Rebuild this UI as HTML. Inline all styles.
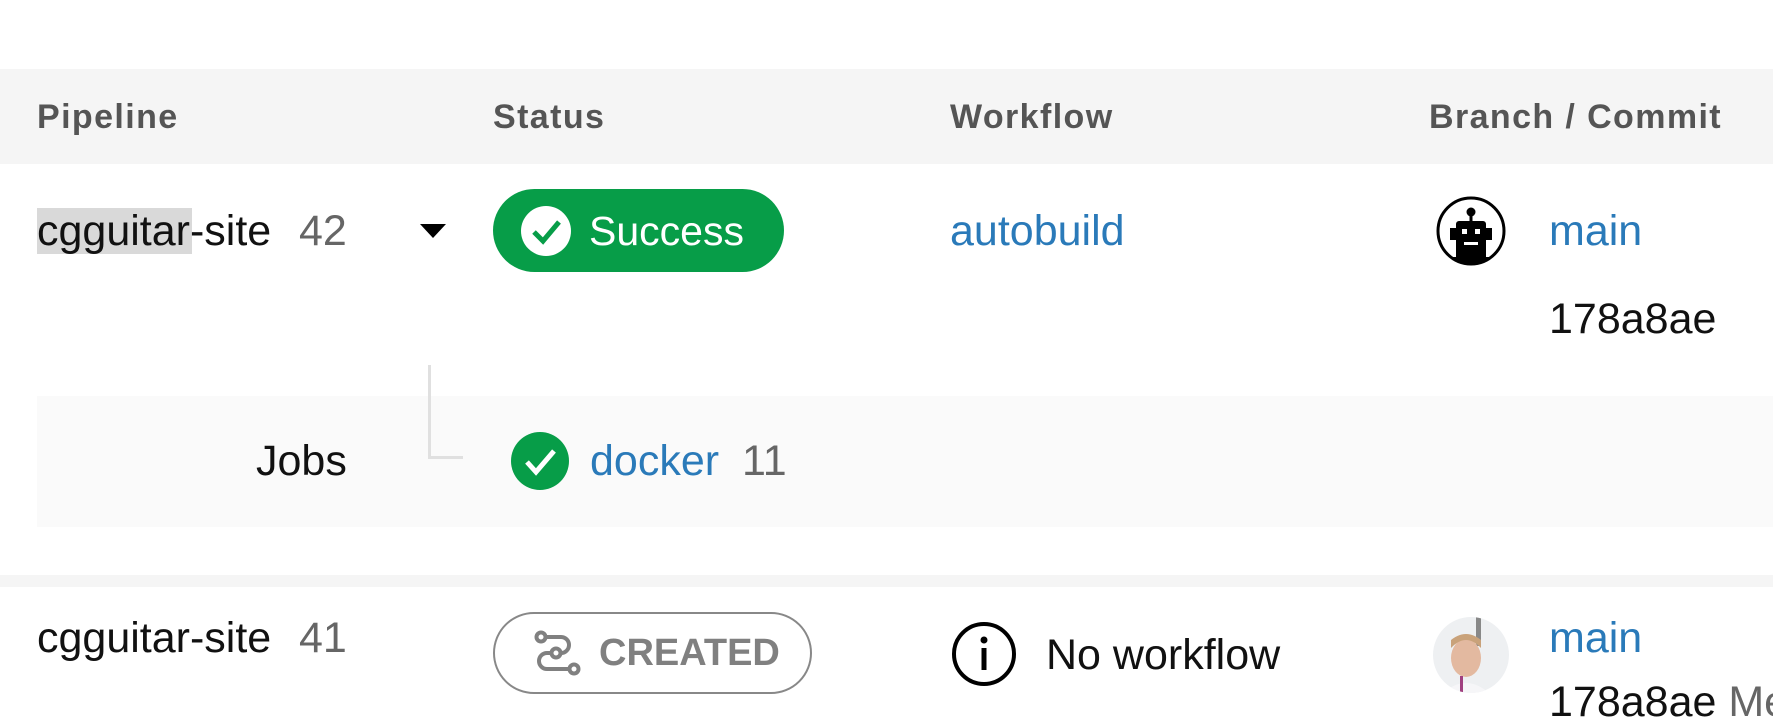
<!DOCTYPE html>
<html><head><meta charset="utf-8"><style>
*{margin:0;padding:0;box-sizing:border-box}
body{width:1773px;height:716px;background:#fff;position:relative;overflow:hidden;font-family:"Liberation Sans",Arial,sans-serif;color:#111}
.a{position:absolute;white-space:nowrap}
.h{font-weight:bold;font-size:34px;color:#555;letter-spacing:1.4px;top:98px}
.t{font-size:43px;line-height:50px}
.blue{color:#2a7ab9}
.grey{color:#666}
</style></head><body>
<div class="a" style="left:0;top:69px;width:1773px;height:95px;background:#f5f5f5"></div>
<div class="a h" style="left:37px">Pipeline</div>
<div class="a h" style="left:493px">Status</div>
<div class="a h" style="left:950px">Workflow</div>
<div class="a h" style="left:1429px">Branch / Commit</div>

<div class="a" style="left:37px;top:208px;width:155px;height:46px;background:#d9d9d9"></div>
<div class="a t" style="left:37px;top:206px">cgguitar-site</div>
<div class="a t grey" style="left:299px;top:206px">42</div>
<svg class="a" style="left:420px;top:224px" width="28" height="16"><path d="M0 0H26L13 14Z" fill="#000"/></svg>

<div class="a" style="left:493px;top:189px;width:291px;height:83px;background:#079d48;border-radius:42px"></div>
<svg class="a" style="left:520px;top:205px" width="52" height="52"><circle cx="26" cy="26" r="25" fill="#fff"/><path d="M14 27l9 9 16-19" stroke="#079d48" stroke-width="5" fill="none"/></svg>
<div class="a" style="left:589px;top:206px;color:#fff;font-size:41px;line-height:50px">Success</div>

<div class="a t blue" style="left:950px;top:206px">autobuild</div>

<svg class="a" style="left:1434px;top:194px" width="74" height="74"><circle cx="37" cy="37" r="33" fill="#fff" stroke="#000" stroke-width="3"/><clipPath id="c"><circle cx="37" cy="37" r="33"/></clipPath><g clip-path="url(#c)"><circle cx="37" cy="18" r="4.5"/><rect x="35.5" y="20" width="3" height="9"/><rect x="22" y="27" width="30" height="50" rx="3"/><rect x="16" y="34" width="42" height="12"/><rect x="28" y="35" width="5" height="5" fill="#fff"/><rect x="41" y="35" width="5" height="5" fill="#fff"/><rect x="30" y="48" width="14" height="3" fill="#fff"/><rect x="0" y="63" width="74" height="20"/></g></svg>
<div class="a t blue" style="left:1549px;top:206px">main</div>
<div class="a t" style="left:1549px;top:294px">178a8ae</div>

<div class="a" style="left:37px;top:396px;width:1736px;height:131px;background:#fafafa"></div>
<div class="a" style="left:428px;top:365px;width:3px;height:94px;background:#e0e0e0"></div>
<div class="a" style="left:428px;top:456px;width:35px;height:3px;background:#e0e0e0"></div>
<div class="a t" style="left:256px;top:436px">Jobs</div>
<svg class="a" style="left:511px;top:432px" width="58" height="58"><circle cx="29" cy="29" r="29" fill="#079d48"/><path d="M16 30l9 10 18-21" stroke="#fff" stroke-width="5" fill="none"/></svg>
<div class="a t blue" style="left:590px;top:436px">docker</div>
<div class="a t grey" style="left:742px;top:436px">11</div>

<div class="a" style="left:0;top:575px;width:1773px;height:12px;background:#f5f5f5"></div>

<div class="a t" style="left:37px;top:613px">cgguitar-site</div>
<div class="a t grey" style="left:299px;top:613px">41</div>
<div class="a" style="left:493px;top:612px;width:319px;height:82px;border:2px solid #888;border-radius:41px"></div>
<svg class="a" style="left:533px;top:630px" width="48" height="48" fill="none" stroke="#808080" stroke-width="4"><circle cx="8" cy="7" r="4.5"/><path d="M12.5 7H28a8 8 0 0 1 0 16H14a8 8 0 0 0 0 16H37"/><circle cx="23" cy="23" r="4.5" fill="#fff"/><circle cx="41" cy="39" r="4.5"/></svg>
<div class="a" style="left:599px;top:630px;font-size:38px;font-weight:bold;color:#808080;line-height:46px">CREATED</div>

<svg class="a" style="left:950px;top:620px" width="68" height="68"><circle cx="34" cy="34" r="30" fill="none" stroke="#000" stroke-width="4"/><circle cx="34" cy="20" r="3.5"/><rect x="31.5" y="28" width="5" height="22"/></svg>
<div class="a t" style="left:1046px;top:630px">No workflow</div>

<svg class="a" style="left:1432px;top:616px" width="78" height="78"><defs><clipPath id="d"><circle cx="39" cy="39" r="38"/></clipPath></defs><g clip-path="url(#d)"><rect width="78" height="78" fill="#eef0f2"/><rect x="44" y="0" width="5" height="30" fill="#888"/><ellipse cx="34" cy="42" rx="15" ry="19" fill="#e3b9a0"/><path d="M19 32q15-16 30 0v-8q-15-12-30 0z" fill="#c9a27a"/><path d="M10 78q24-22 48 0z" fill="#f6f6f8"/><rect x="28" y="60" width="3" height="18" fill="#a04080"/></g></svg>
<div class="a t blue" style="left:1549px;top:613px">main</div>
<div class="a t" style="left:1549px;top:677px">178a8ae <span class="grey">Me</span></div>
</body></html>
